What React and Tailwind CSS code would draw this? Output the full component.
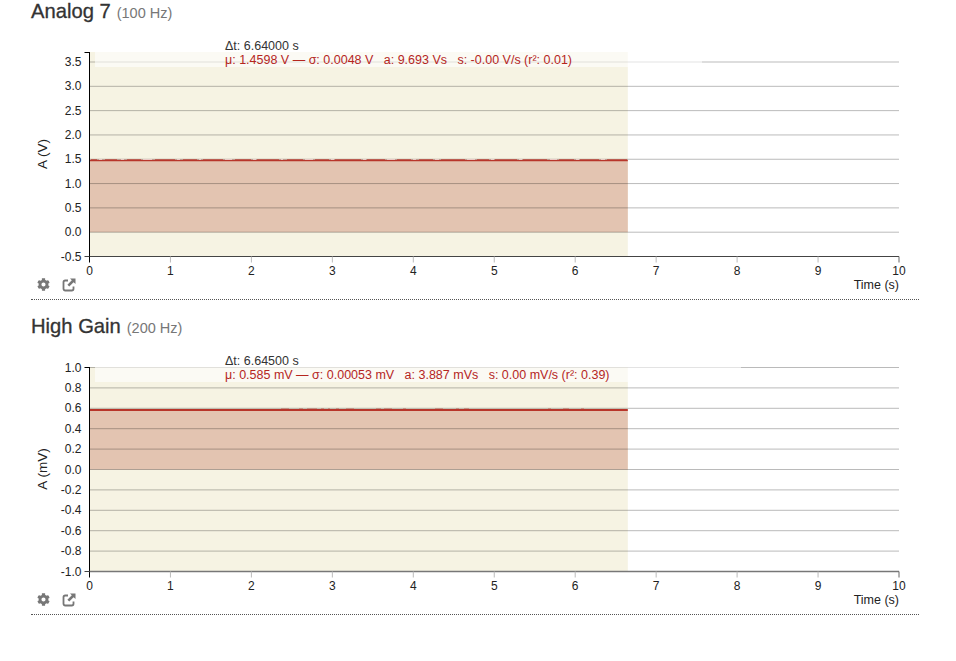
import React from "react";
import { FaCog } from "react-icons/fa";

const FONT = "font-['Liberation_Sans',Arial,sans-serif]";
const X0 = 58.5;
const XS = 80.95;
const xAt = (t) => X0 + t * XS;
const SEL = xAt(6.64) + 0.8;

function LinkIcon() {
  return (
    <svg width="14" height="14" viewBox="0 0 14 14" className="text-[#777]">
      <path d="M6 2.5H3.2A1.7 1.7 0 0 0 1.5 4.2v6.6a1.7 1.7 0 0 0 1.7 1.7h6.6a1.7 1.7 0 0 0 1.7-1.7V8.5" fill="none" stroke="currentColor" strokeWidth="1.8" />
      <path d="M8 0.5h5.5V6L11.6 4.2 7.3 8.6 5.4 6.7 9.8 2.3z" fill="currentColor" />
    </svg>
  );
}

function Chart({ ticks, yLabel, labelY, delta, stats, whites, reds, redY, lineW }) {
  const top = 16;
  const bottom = 220.5;
  const step = (bottom - ticks.start) / (ticks.list.length - 1);
  const yAt = (i) => ticks.start + i * step;
  const zeroY = yAt(ticks.list.indexOf("0.0"));
  return (
    <svg width="888" height="242" className="block" fontFamily="'Liberation Sans', Arial, sans-serif">
      <rect x={X0} y={top} width={SEL - X0} height={bottom - top} fill="#f6f3e3" />
      <rect x={X0} y={redY} width={SEL - X0} height={zeroY - redY} fill="#e3c4b1" />
      {ticks.list.map((t, i) => {
        const y = yAt(i);
        const isLast = i === ticks.list.length - 1;
        return (
          <g key={t}>
            {isLast && <line x1={X0 - 5} x2={X0} y1={y} y2={y} stroke="#444" strokeWidth="1" />}
            {!isLast && <line x1={X0} x2={868} y1={y} y2={y} stroke="#000" strokeOpacity="0.27" strokeWidth="1" />}
            <text x={X0 - 8} y={y + 4} textAnchor="end" fontSize="12" fill="#222">{t}</text>
          </g>
        );
      })}
      <rect x={X0 + 5.5} y={top} width={ticks.coverEnd - X0 - 5.5} height="15" fill="#fff" fillOpacity="0.6" />
      {whites.map((d) => (
        <rect key={d[0]} x={d[0]} y={redY - 1.5} width={d[1]} height="1.5" fill="#fff" fillOpacity="0.95" />
      ))}
      {reds.map((d) => (
        <rect key={d[0]} x={d[0]} y={redY - 1.5} width={d[1]} height="1" fill="#b8352a" fillOpacity="0.6" />
      ))}
      <line x1={X0} x2={SEL} y1={redY} y2={redY} stroke="#b8352a" strokeWidth={lineW} />
      <line x1={X0} x2={X0} y1={top} y2={bottom + 6} stroke="#000" strokeWidth="1" />
      <line x1={X0 - 5} x2={X0} y1={top + 0.5} y2={top + 0.5} stroke="#000" strokeWidth="1" />
      <line x1={X0} x2={868} y1={bottom} y2={bottom} stroke={ticks.axis} strokeWidth={ticks.axisW} />
      {Array.from({ length: 11 }, (_, i) => (
        <g key={i}>
          {i > 0 && <line x1={xAt(i)} x2={xAt(i)} y1={bottom} y2={bottom + 6} stroke={i === 10 ? "#666" : "#bbb"} strokeWidth="1" />}
          <text x={xAt(i)} y={bottom + 18} textAnchor="middle" fontSize="12" fill="#222">{i}</text>
        </g>
      ))}
      <text transform={`translate(16 ${labelY}) rotate(-90)`} textAnchor="middle" fontSize="13.5" fill="#222">{yLabel}</text>
      <text x="194" y="14" fontSize="12.5" fill="#333">{delta}</text>
      <text x="194" y="28" fontSize="12.5" fill="#b5261e" className="whitespace-pre">{stats}</text>
    </svg>
  );
}

function Section({ title, rate, className, chart }) {
  return (
    <section className={`w-[888px] border-b border-dotted border-[#555] ${className}`}>
      <h2 className="flex items-baseline gap-[6px] h-[22px] leading-[22px]">
        <span className="text-[20.2px] text-[#333] [-webkit-text-stroke:0.3px_#333]">{title}</span>
        <span className="text-[14.5px] text-[#777]">{rate}</span>
      </h2>
      <div className="mt-[14px]">
        <Chart {...chart} />
      </div>
      <div className="flex items-start justify-between h-[21px] pl-[6px] pr-[20px]">
        <div className="flex items-start gap-[12px]">
          <FaCog className="text-[#777] w-[13px] h-[13px]" />
          <LinkIcon />
        </div>
        <span className="text-[12.5px] leading-[14px] text-[#222]">Time (s)</span>
      </div>
    </section>
  );
}

const whites1 = [[112, 9], [194, 7], [274, 8], [356, 8], [436, 8], [519, 7], [68, 3], [90, 3], [146, 3], [168, 2], [222, 3], [250, 2], [300, 3], [332, 3], [382, 3], [404, 4], [460, 3], [488, 3], [545, 3], [570, 4]];
const reds1 = [[60, 6], [74, 12], [96, 14], [124, 20], [152, 14], [172, 20], [204, 16], [226, 22], [256, 16], [284, 14], [304, 26], [336, 18], [366, 14], [388, 14], [410, 24], [446, 12], [464, 22], [492, 24], [528, 15], [549, 19], [576, 20]];
const reds2 = [[250, 8], [268, 4], [276, 10], [290, 3], [297, 2], [305, 3], [315, 8], [345, 5], [353, 8], [372, 3], [404, 8], [425, 3], [433, 5], [517, 3], [532, 6], [550, 3]];

export default function App() {
  return (
    <div className={`min-h-[661px] bg-white pl-[31px] ${FONT}`}>
      <Section
        title="Analog 7"
        rate="(100 Hz)"
        chart={{
          ticks: { list: ["3.5", "3.0", "2.5", "2.0", "1.5", "1.0", "0.5", "0.0", "-0.5"], start: 26, axis: "#444", axisW: 1, coverEnd: 671 },
          yLabel: "A (V)",
          labelY: 118,
          delta: "Δt: 6.64000 s",
          stats: "μ: 1.4598 V — σ: 0.0048 V   a: 9.693 Vs   s: -0.00 V/s (r²: 0.01)",
          whites: whites1,
          reds: reds1,
          redY: 124.5,
          lineW: 1.4,
        }}
      />
      <Section
        title="High Gain"
        rate="(200 Hz)"
        className="mt-[15px]"
        chart={{
          ticks: { list: ["1.0", "0.8", "0.6", "0.4", "0.2", "0.0", "-0.2", "-0.4", "-0.6", "-0.8", "-1.0"], start: 16.5, axis: "#777", axisW: 1.5, coverEnd: 710 },
          yLabel: "A (mV)",
          labelY: 118,
          delta: "Δt: 6.64500 s",
          stats: "μ: 0.585 mV — σ: 0.00053 mV   a: 3.887 mVs   s: 0.00 mV/s (r²: 0.39)",
          whites: [],
          reds: reds2,
          redY: 59,
          lineW: 2,
        }}
      />
    </div>
  );
}
